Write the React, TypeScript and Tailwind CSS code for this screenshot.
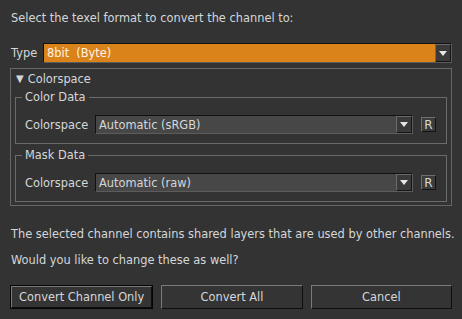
import React from 'react'

function Arrow() {
  return (
    <div className="w-[16px] h-full flex items-center justify-center bg-[#3a3a3a] border border-t-[#6a6a6a] border-l-[#6a6a6a] border-r-[#151515] border-b-[#151515]">
      <svg width="8" height="5" viewBox="0 0 8 5">
        <path d="M0 0 L8 0 L4 5 Z" fill="#e6e6e6" />
      </svg>
    </div>
  )
}

function Combo({ value, orange }: { value: string, orange?: boolean }) {
  return (
    <div className="flex-1 h-full flex border border-t-[#111] border-l-[#111] border-r-[#5c5c5c] border-b-[#5c5c5c]">
      <div className={`flex-1 flex items-center pl-[3px] whitespace-pre ${orange ? 'bg-[#da831b] text-[#fff4e6]' : 'bg-[#474747]'}`}>
        {value}
      </div>
      <Arrow />
    </div>
  )
}

function RButton() {
  return (
    <div className="w-[15px] h-[15px] ml-[8px] flex items-center justify-center bg-[#3c3c3c] border border-t-[#6e6e6e] border-l-[#6e6e6e] border-r-[#121212] border-b-[#121212] text-[12px] leading-none">
      R
    </div>
  )
}

function SubGroup({ title, value }: { title: string, value: string }) {
  return (
    <div className="relative border border-[#6b6b6b] h-[47px] flex items-center pl-[9px] pr-[10px]">
      <span className="absolute -top-[9px] left-[6px] px-[3px] bg-[#333333] leading-[16px]">{title}</span>
      <div className="flex items-center h-[19px] w-full mt-[8px]">
        <span className="w-[70px]">Colorspace</span>
        <Combo value={value} />
        <RButton />
      </div>
    </div>
  )
}

function Button({ label, primary }: { label: string, primary?: boolean }) {
  return (
    <div className={`flex-1 h-[24px] ${primary ? 'border border-[#050505]' : ''}`}>
      <div className="h-full flex items-center justify-center bg-[#343434] border border-t-[#7a7a7a] border-l-[#7a7a7a] border-r-[#0e0e0e] border-b-[#0e0e0e]">
        {label}
      </div>
    </div>
  )
}

export default function App() {
  return (
    <div className="w-[462px] h-[319px] bg-[#333333] text-[#d4d7da] text-[11.4px] leading-[16px] px-[10px] overflow-hidden whitespace-nowrap" style={{ fontFamily: '"DejaVu Sans", Verdana, sans-serif' }}>
      <div className="pt-[10px] pl-[1px]">Select the texel format to convert the channel to:</div>

      <div className="flex items-center h-[20px] mt-[17px]">
        <span className="w-[33px] pl-[1px]">Type</span>
        <Combo value="8bit  (Byte)" orange />
      </div>

      <div className="mt-[5px] border border-[#666666] h-[138px] px-[4px] pt-[1px]">
        <div className="flex items-center h-[18px] pl-[1px]">
          <span className="text-[10px] mr-[4px]">▼</span>
          <span>Colorspace</span>
        </div>
        <div className="mt-[9px]">
          <SubGroup title="Color Data" value="Automatic (sRGB)" />
        </div>
        <div className="mt-[11px]">
          <SubGroup title="Mask Data" value="Automatic (raw)" />
        </div>
      </div>

      <div className="mt-[20px] pl-[1px]">The selected channel contains shared layers that are used by other channels.</div>
      <div className="mt-[10px] pl-[1px]">Would you like to change these as well?</div>

      <div className="flex gap-[8px] mt-[17px]">
        <Button label="Convert Channel Only" primary />
        <Button label="Convert All" />
        <Button label="Cancel" />
      </div>
    </div>
  )
}
